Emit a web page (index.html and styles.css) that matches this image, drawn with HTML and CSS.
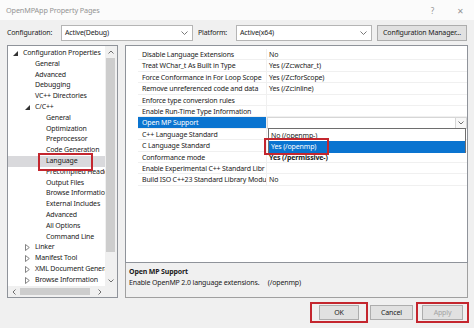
FILE: index.html
```html
<html><head>
<title>OpenMPApp Property Pages</title>
<link rel="stylesheet" href="styles.css">
</head>
<body>
<div class="titlebar">
    <span class="title">OpenMPApp Property Pages</span>
    <span class="tb-btns"><span>?</span><span>&#x2715;</span></span>
</div>

<div class="toolbar">
    <span class="lbl lbl-config">Configuration:</span>
    <div class="combo combo-config">
        <span>Active(Debug)</span>
        <svg class="chev" width="7" height="4" viewBox="0 0 7 4"><polyline points="0.5,0.5 3.5,3.5 6.5,0.5" fill="none" stroke="#6a6a6a" stroke-width="0.9"/></svg>
    </div>
    <span class="lbl lbl-platform">Platform:</span>
    <div class="combo combo-platform">
        <span>Active(x64)</span>
        <svg class="chev" width="7" height="4" viewBox="0 0 7 4"><polyline points="0.5,0.5 3.5,3.5 6.5,0.5" fill="none" stroke="#6a6a6a" stroke-width="0.9"/></svg>
    </div>
    <button class="btn btn-cfgmgr">Configuration Manager...</button>
</div>

<div class="main">
    <div class="tree">
        <div class="tree-rows">
            <div class="node lvl0"><span class="exp"><svg width="5" height="5" viewBox="0 0 5 5"><polygon points="5,0 5,5 0,5" fill="#333"/></svg></span><span class="txt">Configuration Properties</span></div>
            <div class="node lvl1"><span class="exp"></span><span class="txt">General</span></div>
            <div class="node lvl1"><span class="exp"></span><span class="txt">Advanced</span></div>
            <div class="node lvl1"><span class="exp"></span><span class="txt">Debugging</span></div>
            <div class="node lvl1"><span class="exp"></span><span class="txt">VC++ Directories</span></div>
            <div class="node lvl1"><span class="exp"><svg width="5" height="5" viewBox="0 0 5 5"><polygon points="5,0 5,5 0,5" fill="#333"/></svg></span><span class="txt">C/C++</span></div>
            <div class="node lvl2"><span class="exp"></span><span class="txt">General</span></div>
            <div class="node lvl2"><span class="exp"></span><span class="txt">Optimization</span></div>
            <div class="node lvl2"><span class="exp"></span><span class="txt">Preprocessor</span></div>
            <div class="node lvl2"><span class="exp"></span><span class="txt">Code Generation</span></div>
            <div class="node lvl2 selected"><span class="exp"></span><span class="txt mark-text">Language</span></div>
            <div class="node lvl2"><span class="exp"></span><span class="txt">Precompiled Heade</span></div>
            <div class="node lvl2"><span class="exp"></span><span class="txt">Output Files</span></div>
            <div class="node lvl2"><span class="exp"></span><span class="txt">Browse Information</span></div>
            <div class="node lvl2"><span class="exp"></span><span class="txt">External Includes</span></div>
            <div class="node lvl2"><span class="exp"></span><span class="txt">Advanced</span></div>
            <div class="node lvl2"><span class="exp"></span><span class="txt">All Options</span></div>
            <div class="node lvl2"><span class="exp"></span><span class="txt">Command Line</span></div>
            <div class="node lvl1"><span class="exp"><svg width="5" height="7" viewBox="0 0 5 7"><polygon points="0.5,0.5 4.3,3.5 0.5,6.5" fill="none" stroke="#666" stroke-width="0.8"/></svg></span><span class="txt">Linker</span></div>
            <div class="node lvl1"><span class="exp"><svg width="5" height="7" viewBox="0 0 5 7"><polygon points="0.5,0.5 4.3,3.5 0.5,6.5" fill="none" stroke="#666" stroke-width="0.8"/></svg></span><span class="txt">Manifest Tool</span></div>
            <div class="node lvl1"><span class="exp"><svg width="5" height="7" viewBox="0 0 5 7"><polygon points="0.5,0.5 4.3,3.5 0.5,6.5" fill="none" stroke="#666" stroke-width="0.8"/></svg></span><span class="txt">XML Document Genera</span></div>
            <div class="node lvl1"><span class="exp"><svg width="5" height="7" viewBox="0 0 5 7"><polygon points="0.5,0.5 4.3,3.5 0.5,6.5" fill="none" stroke="#666" stroke-width="0.8"/></svg></span><span class="txt">Browse Information</span></div>
        </div>
        <div class="vscroll">
            <div class="arrow"><svg width="6" height="4" viewBox="0 0 6 4"><polyline points="0.5,3.5 3,1 5.5,3.5" fill="none" stroke="#606060" stroke-width="0.9"/></svg></div>
            <div class="vthumb"></div>
            <div class="arrow arrow-end"><svg width="6" height="4" viewBox="0 0 6 4"><polyline points="0.5,0.5 3,3 5.5,0.5" fill="none" stroke="#606060" stroke-width="0.9"/></svg></div>
        </div>
        <div class="hscroll">
            <div class="arrow"><svg width="4" height="6" viewBox="0 0 4 6"><polyline points="3.5,0.5 1,3 3.5,5.5" fill="none" stroke="#606060" stroke-width="0.9"/></svg></div>
            <div class="hthumb"></div>
            <div class="arrow arrow-end"><svg width="4" height="6" viewBox="0 0 4 6"><polyline points="0.5,0.5 3,3 0.5,5.5" fill="none" stroke="#606060" stroke-width="0.9"/></svg></div>
        </div>
        <div class="corner"></div>
    </div>

    <div class="right">
        <div class="grid">
            <div class="prow"><div class="gut"></div><div class="pname">Disable Language Extensions</div><div class="pval">No</div></div>
            <div class="prow"><div class="gut"></div><div class="pname">Treat WChar_t As Built in Type</div><div class="pval">Yes (/Zc:wchar_t)</div></div>
            <div class="prow"><div class="gut"></div><div class="pname">Force Conformance in For Loop Scope</div><div class="pval">Yes (/Zc:forScope)</div></div>
            <div class="prow"><div class="gut"></div><div class="pname">Remove unreferenced code and data</div><div class="pval">Yes (/Zc:inline)</div></div>
            <div class="prow"><div class="gut"></div><div class="pname">Enforce type conversion rules</div><div class="pval"></div></div>
            <div class="prow"><div class="gut"></div><div class="pname">Enable Run-Time Type Information</div><div class="pval"></div></div>
            <div class="prow"><div class="gut"></div><div class="pname active">Open MP Support</div>
                <div class="pval editing">
                    <span class="edit-btn"><svg width="6" height="4" viewBox="0 0 6 4"><polyline points="0.5,0.5 3,3 5.5,0.5" fill="none" stroke="#606060" stroke-width="0.9"/></svg></span>
                </div>
            </div>
            <div class="prow"><div class="gut"></div><div class="pname">C++ Language Standard</div><div class="pval"></div></div>
            <div class="prow"><div class="gut"></div><div class="pname">C Language Standard</div><div class="pval"></div></div>
            <div class="prow"><div class="gut"></div><div class="pname">Conformance mode</div><div class="pval bold">Yes (/permissive-)</div></div>
            <div class="prow"><div class="gut"></div><div class="pname">Enable Experimental C++ Standard Libr</div><div class="pval"></div></div>
            <div class="prow"><div class="gut"></div><div class="pname">Build ISO C++23 Standard Library Modu</div><div class="pval">No</div></div>

            <div class="dropdown">
                <div class="opt">No (/openmp-)</div>
                <div class="opt opt-sel">Yes (/openmp)</div>
            </div>
            <div class="redbox redbox-yes"></div>
        </div>
        <div class="desc">
            <div class="desc-title">Open MP Support</div>
            <div class="desc-text">Enable OpenMP 2.0 language extensions.&nbsp;&nbsp;&nbsp;&nbsp;&nbsp;(/openmp)</div>
        </div>
    </div>
</div>

<div class="footer">
    <div class="mark mark-ok"><button class="btn btn-ok">OK</button></div>
    <button class="btn btn-cancel">Cancel</button>
    <div class="mark mark-apply"><button class="btn btn-apply">Apply</button></div>
</div>
</body>
</html>
```

FILE: styles.css
```css
body {
    margin: 0;
    width: 474px;
    height: 328px;
    overflow: hidden;
    background: #f0f0f0;
    color: #1b1b1b;
    font-family: "Noto Sans", "Open Sans", sans-serif;
    font-size: 7px;
    letter-spacing: -0.15px;
}

/* title bar */
.titlebar {
    height: 20px;
    display: flex;
    align-items: center;
    padding: 0 10px 0 6px;
    background: #fbfbfb;
    color: #949494;
    font-size: 7.3px;
}
.tb-btns {
    margin-left: auto;
    display: flex;
    gap: 23px;
    font-size: 8px;
}

/* configuration row */
.toolbar {
    display: flex;
    align-items: center;
    height: 17px;
    margin-top: 4px;
    padding-left: 7px;
}
.lbl-config { width: 54px; }
.lbl-platform { width: 38px; margin-left: 5px; }
.combo {
    height: 16px;
    box-sizing: border-box;
    display: flex;
    align-items: center;
    padding: 0 4px 0 3px;
    background: #ffffff;
    border: 1px solid #b5b5b5;
}
.combo .chev { margin-left: auto; }
.combo-config { width: 132px; }
.combo-platform { width: 136px; }

.btn {
    font-family: inherit;
    font-size: inherit;
    letter-spacing: inherit;
    color: #1b1b1b;
    background: #e1e1e1;
    border: 1px solid #adadad;
    height: 15px;
    padding: 0;
    box-sizing: border-box;
}
.btn-cfgmgr {
    width: 90px;
    height: 16px;
    margin-left: 5px;
}

/* main area */
.main {
    display: flex;
    gap: 7px;
    margin-top: 4px;
    padding-left: 7px;
    height: 253px;
}

.tree {
    width: 111px;
    height: 253px;
    box-sizing: border-box;
    border: 1px solid #8f939a;
    background: #ffffff;
    display: grid;
    grid-template-columns: 1fr 12px;
    grid-template-rows: 1fr 11px;
}
.tree-rows {
    padding-top: 2px;
    overflow: hidden;
}
.node {
    height: 10.8px;
    line-height: 10.8px;
    white-space: nowrap;
    display: flex;
    align-items: center;
}
.node .exp {
    width: 10px;
    flex: none;
    display: flex;
    align-items: center;
}
.lvl0 { padding-left: 5px; }
.lvl1 { padding-left: 17px; }
.lvl2 { padding-left: 28px; }
.node.selected { background: #d9d9dc; }

.mark-text {
    position: relative;
}
.mark-text::after {
    content: "";
    position: absolute;
    left: -8px;
    right: -15px;
    top: -3px;
    bottom: -4px;
    border: 2px solid #c4262e;
}

.vscroll {
    background: #f0f0f0;
    display: flex;
    flex-direction: column;
}
.arrow {
    height: 11px;
    flex: none;
    display: flex;
    align-items: center;
    justify-content: center;
}
.arrow-end { margin-top: auto; }
.vthumb {
    margin: 1px 2px 0 1px;
    height: 194px;
    background: #cdcdcd;
}
.hscroll {
    background: #f0f0f0;
    display: flex;
}
.hscroll .arrow { width: 11px; }
.hscroll .arrow-end { margin-top: 0; margin-left: auto; }
.hthumb {
    width: 70px;
    margin: 2px 0 2px 1px;
    background: #cdcdcd;
}
.corner { background: #f0f0f0; }

/* property grid */
.right {
    width: 343px;
    display: flex;
    flex-direction: column;
}
.grid {
    position: relative;
    height: 219px;
    box-sizing: border-box;
    border: 1px solid #8f939a;
    background: #ffffff;
    padding-top: 3px;
}
.prow {
    display: flex;
    height: 11.4px;
    line-height: 11.4px;
}
.gut { width: 12px; flex: none; }
.pname {
    width: 129px;
    flex: none;
    box-sizing: border-box;
    padding-left: 4px;
    white-space: nowrap;
    overflow: hidden;
    border-bottom: 1px solid #f0f0f0;
    border-right: 1px solid #f0f0f0;
}
.pname.active {
    background: #0a74d0;
    color: #ffffff;
}
.pval {
    flex: 1;
    padding-left: 2px;
    white-space: nowrap;
    overflow: hidden;
    border-bottom: 1px solid #f0f0f0;
}
.pval.bold { font-weight: bold; }
.pval.editing {
    display: flex;
    border: 1px solid #d6d6d6;
    box-sizing: border-box;
}
.edit-btn {
    margin-left: auto;
    width: 10px;
    border-left: 1px solid #d6d6d6;
    display: flex;
    align-items: center;
    justify-content: center;
    background: #f7f7f7;
}

.dropdown {
    position: absolute;
    left: 142px;
    top: 82px;
    width: 198px;
    height: 25px;
    box-sizing: border-box;
    border: 1px solid #6e6e6e;
    background: #ffffff;
    padding-top: 1px;
}
.opt {
    height: 11.4px;
    line-height: 11.4px;
    padding-left: 2px;
}
.opt-sel {
    background: #0a74d0;
    color: #ffffff;
}
.redbox {
    position: absolute;
    border: 2px solid #c4262e;
}
.redbox-yes {
    left: 138px;
    top: 92px;
    width: 61px;
    height: 13px;
}

.desc {
    height: 35px;
    box-sizing: border-box;
    border: 1px solid #a0a0a0;
    border-top: none;
    padding: 3px 3px 2px;
    line-height: 11px;
}
.desc-title { font-weight: bold; }

/* dialog buttons */
.footer {
    display: flex;
    justify-content: flex-end;
    align-items: center;
    height: 21px;
    margin-top: 4px;
    padding-right: 5px;
}
.mark {
    height: 21px;
    box-sizing: border-box;
    border: 2px solid #c4262e;
    display: flex;
    align-items: center;
}
.mark-ok { padding: 0 7px; margin-right: 2px; }
.mark-apply { padding: 0 4px 0 4px; margin-left: 3px; }
.btn-ok { width: 40px; }
.btn-cancel { width: 43px; }
.btn-apply { width: 41px; color: #a3a3a3; }
```
